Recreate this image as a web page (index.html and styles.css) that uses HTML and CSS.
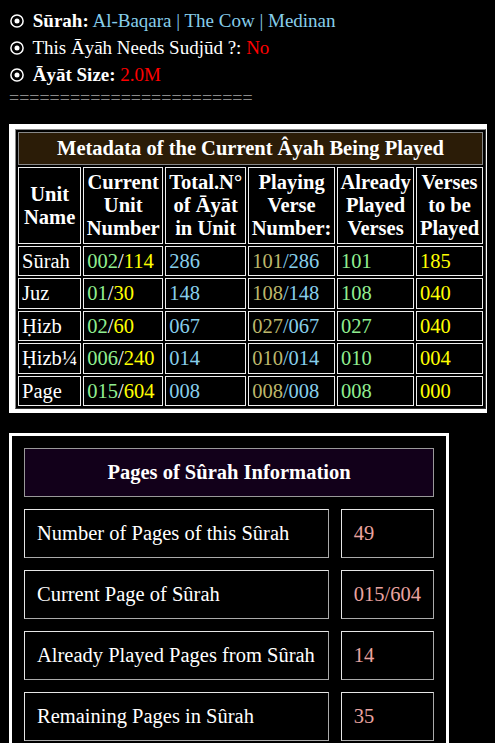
FILE: index.html
```html
<!DOCTYPE html>
<html lang="en">
  <head>
    <meta charset="utf-8" />
    <title>Āyah Metadata</title>
    <link rel="stylesheet" href="styles.css">
  </head>
  <body>
    <div class="info">
      <p><svg class="dot" viewBox="0 0 14 14"><circle cx="7" cy="7" r="6.1" /><circle class="fill" cx="7" cy="7" r="2.5" /></svg> <b>Sūrah:</b> <span class="blue">Al-Baqara | The Cow | Medinan</span></p>
      <p><svg class="dot" viewBox="0 0 14 14"><circle cx="7" cy="7" r="6.1" /><circle class="fill" cx="7" cy="7" r="2.5" /></svg> This Āyāh Needs Sudjūd ?: <span class="red">No</span></p>
      <p><svg class="dot" viewBox="0 0 14 14"><circle cx="7" cy="7" r="6.1" /><circle class="fill" cx="7" cy="7" r="2.5" /></svg> <b>Āyāt Size:</b> <span class="red">2.0M</span></p>
      <p class="sep">========================</p>
    </div>

    <div class="meta-box">
      <table class="meta">
        <tr>
          <th class="title" colspan="6">Metadata of the Current Âyah Being Played</th>
        </tr>
        <tr class="head">
          <th class="c1">Unit<br>Name</th>
          <th class="c2">Current<br>Unit<br>Number</th>
          <th class="c3">Total.N°<br>of Āyāt<br>in Unit</th>
          <th class="c4">Playing<br>Verse<br>Number:</th>
          <th class="c5">Already<br>Played<br>Verses</th>
          <th class="c6">Verses<br>to be<br>Played</th>
        </tr>
        <tr>
          <td>Sūrah</td>
          <td><span class="green">002</span>/<span class="yellow">114</span></td>
          <td class="blue">286</td>
          <td><span class="khaki">101</span><span class="blue">/286</span></td>
          <td class="green">101</td>
          <td class="yellow">185</td>
        </tr>
        <tr>
          <td>Juz</td>
          <td><span class="green">01</span>/<span class="yellow">30</span></td>
          <td class="blue">148</td>
          <td><span class="khaki">108</span><span class="blue">/148</span></td>
          <td class="green">108</td>
          <td class="yellow">040</td>
        </tr>
        <tr>
          <td>Ḥizb</td>
          <td><span class="green">02</span>/<span class="yellow">60</span></td>
          <td class="blue">067</td>
          <td><span class="khaki">027</span><span class="blue">/067</span></td>
          <td class="green">027</td>
          <td class="yellow">040</td>
        </tr>
        <tr>
          <td>Ḥizb¼</td>
          <td><span class="green">006</span>/<span class="yellow">240</span></td>
          <td class="blue">014</td>
          <td><span class="khaki">010</span><span class="blue">/014</span></td>
          <td class="green">010</td>
          <td class="yellow">004</td>
        </tr>
        <tr>
          <td>Page</td>
          <td><span class="green">015</span>/<span class="yellow">604</span></td>
          <td class="blue">008</td>
          <td><span class="khaki">008</span><span class="blue">/008</span></td>
          <td class="green">008</td>
          <td class="yellow">000</td>
        </tr>
      </table>
    </div>

    <table class="pages">
      <tr>
        <th class="title" colspan="2">Pages of Sûrah Information</th>
      </tr>
      <tr>
        <td class="label">Number of Pages of this Sûrah</td>
        <td class="value">49</td>
      </tr>
      <tr>
        <td class="label">Current Page of Sûrah</td>
        <td class="value">015/604</td>
      </tr>
      <tr>
        <td class="label">Already Played Pages from Sûrah</td>
        <td class="value">14</td>
      </tr>
      <tr>
        <td class="label">Remaining Pages in Sûrah</td>
        <td class="value">35</td>
      </tr>
    </table>
  </body>
</html>
```

FILE: styles.css
```css
body{
  margin: 7px 8px 8px;
  padding: 0 1px;
  background: #000;
  color: #fff;
  font-family: "Liberation Serif", "Times New Roman", serif;
  font-size: 19px;
}
.info p{
  margin: 0;
  line-height: 27px;
  white-space: nowrap;
}
.dot{
  width: 14px;
  height: 14px;
  margin: 0 4px 0 1px;
  vertical-align: -1px;
}
.dot circle{
  fill: none;
  stroke: #fff;
  stroke-width: 1.5;
}
.dot .fill{
  fill: #fff;
  stroke: none;
}
.info .sep{
  color: #8a8a8a;
  font-size: 18px;
  line-height: 20px;
}
.blue{ color: #87ceeb; }
.red{ color: #ff0000; }
.green{ color: #90ee90; }
.yellow{ color: #ffff00; }
.khaki{ color: #bdb76b; }

/* metadata table */
.meta-box{
  margin-top: 16px;
  width: 471px;
  border: 6px solid #fff;
  border-top-width: 5px;
  border-bottom-width: 4px;
}
.meta{
  width: 471px;
  border: 1px outset #888;
  border-spacing: 2px;
  margin: 0;
  font-size: 20.5px;
}
.meta th, .meta td{
  box-sizing: border-box;
  border: 1px solid #eee;
  padding: 1px 2px;
}
.meta .title{
  background: #2b1c07;
  border-color: #888;
  padding: 2px;
  line-height: 27px;
}
.meta .head th{
  line-height: 23px;
  padding: 3px 1px;
}
.meta .c1{ width: 63px; }
.meta .c2{ width: 80px; }
.meta .c3{ width: 81px; }
.meta .c4{ width: 87px; }
.meta .c5{ width: 77px; }
.meta .c6{ width: 67px; }
.meta td{
  line-height: 26.4px;
  text-align: left;
  padding: 1px 3px;
}

/* pages table */
.pages{
  margin-top: 20px;
  width: 440px;
  border: 3px solid #fff;
  border-spacing: 12px;
  font-size: 20.5px;
}
.pages th, .pages td{
  box-sizing: border-box;
  height: 49px;
}
.pages .title{
  background: #12001a;
  border: 1px solid #999;
  padding: 0;
}
.pages td{
  border: 1px solid;
  border-color: #e6e6e6 #aaa #aaa #e6e6e6;
  padding: 0 12px;
}
.pages .label{
  width: 305px;
}
.pages .value{
  color: #eaa4a0;
}
```
